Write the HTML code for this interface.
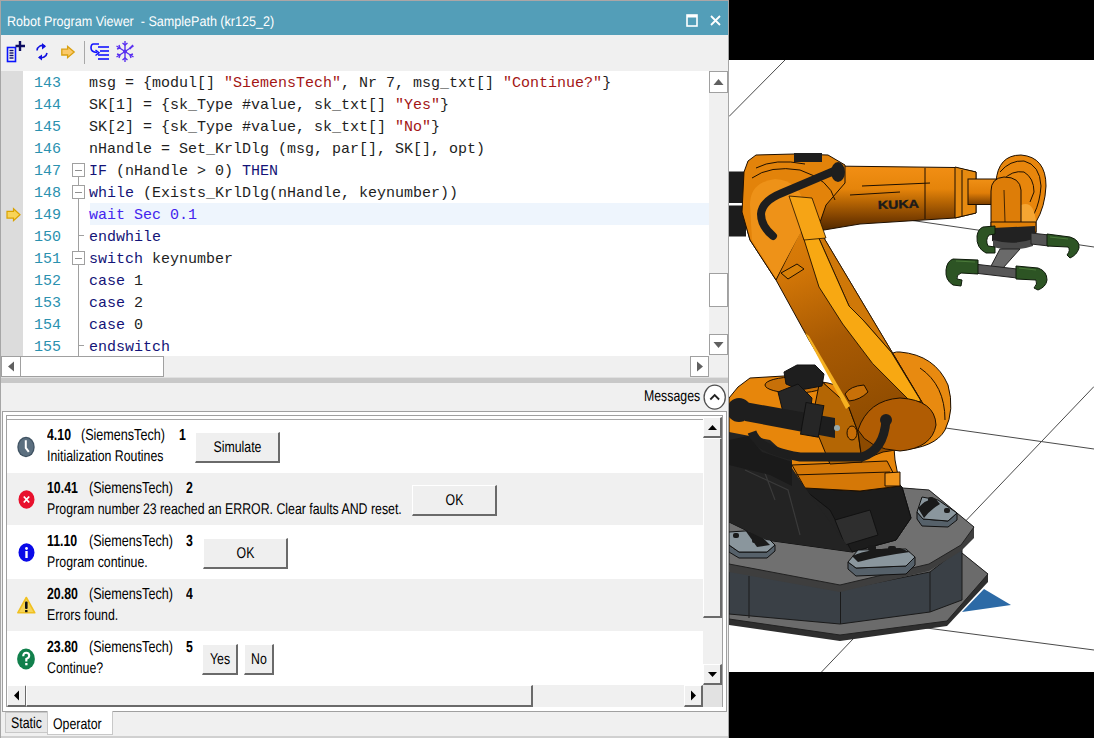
<!DOCTYPE html>
<html><head><meta charset="utf-8">
<style>
*{margin:0;padding:0;box-sizing:border-box}
html,body{width:1094px;height:738px;overflow:hidden;background:#000;font-family:"Liberation Sans",sans-serif}
.a{position:absolute}
#panel{position:absolute;left:0;top:0;width:729px;height:738px;background:#f0f0f0;overflow:hidden}
.bl{position:absolute;background:#a6a6a6}
#title{position:absolute;left:1px;top:1px;width:727px;height:34px;background:#539eb8;color:#fff}
.tt{position:absolute;left:6px;top:11.7px;font-size:14px;line-height:16px;white-space:pre;transform:scaleX(0.897);transform-origin:0 0;text-rendering:geometricPrecision}
#code{position:absolute;left:1px;top:71px;width:708px;height:285px;background:#fff;overflow:hidden}
#gutter{position:absolute;left:0;top:0;width:22px;height:285px;background:#dcdcdc}
.ln{position:absolute;left:33px;font-family:"Liberation Mono",monospace;font-size:15px;color:#2b91af;height:22px;line-height:22px;white-space:pre}
.cl{position:absolute;left:88px;font-family:"Liberation Mono",monospace;font-size:15px;color:#1e1e1e;height:22px;line-height:22px;white-space:pre}
.s{color:#a31515}
.k{color:#141478}
.w{color:#4424ee}
.sb{position:absolute;background:#fff;border:1px solid #a0a0a0}
.mt{position:absolute;font-size:14px;line-height:16px;color:#000;white-space:pre;transform:scaleX(0.88);transform-origin:0 0}
.b{font-weight:bold}
.btn{position:absolute;background:#efefef;border-top:1px solid #fff;border-left:1px solid #fff;border-right:2px solid #6a6a6a;border-bottom:2px solid #6a6a6a}
.cb{position:absolute;background:#f0f0f0;border-top:1px solid #fff;border-left:1px solid #fff;border-right:2px solid #6a6a6a;border-bottom:2px solid #6a6a6a}
.h{font-size:16px;transform:scaleX(0.77);text-rendering:geometricPrecision}
.bd{font-size:15.5px;transform:scaleX(0.795);text-rendering:geometricPrecision}

</style></head><body>
<div class="a" style="left:729px;top:60px;width:365px;height:612px;background:#fff;overflow:hidden"><svg width="365" height="612" viewBox="729 60 365 612" style="position:absolute;left:0;top:0">
<defs>
<linearGradient id="ua" x1="0" y1="0" x2="0" y2="1">
<stop offset="0" stop-color="#f28f14"/>
<stop offset="0.35" stop-color="#e5840a"/>
<stop offset="0.55" stop-color="#b56403"/>
<stop offset="0.8" stop-color="#7a3e00"/>
<stop offset="1" stop-color="#4a2600"/>
</linearGradient>
<linearGradient id="la" x1="0" y1="0" x2="0.3" y2="1">
<stop offset="0" stop-color="#e3840a"/>
<stop offset="0.3" stop-color="#d27607"/>
<stop offset="0.6" stop-color="#a85a03"/>
<stop offset="1" stop-color="#8c4a00"/>
</linearGradient>
</defs>
<!-- floor lines -->
<g stroke="#4a4a4a" stroke-width="1" fill="none">
<line x1="729" y1="116.5" x2="785" y2="60"/>
<line x1="909" y1="220" x2="1094" y2="247"/>
<line x1="935" y1="426.5" x2="1094" y2="449"/>
<line x1="919" y1="627" x2="1094" y2="650"/>
<line x1="821.5" y1="672" x2="1094" y2="386.5"/>
</g>
<!-- lower plate -->
<path d="M729 556 L962 553 L988 574 L988 582 L947 626 L840 641 L729 625 Z" fill="#2e2e2e"/>
<path d="M729 556 L962 553 L988 574 L947 621 L840 635 L729 619 Z" fill="#6b6b6b" stroke="#222" stroke-width="1"/>
<!-- blue triangle -->
<path d="M962 612 L984 589 L1011 605 Z" fill="#2c6aa6"/>
<!-- box faces -->
<path d="M729 570 L840 590 L930 572 L962 547 L962 600 L930 612 L840 624 L729 614 Z" fill="#3a4046" stroke="#1a1a1a" stroke-width="1"/>
<line x1="749" y1="576" x2="749" y2="618" stroke="#1a1a1a"/>
<line x1="840.5" y1="590" x2="840.5" y2="624" stroke="#1a1a1a"/>
<line x1="930" y1="572" x2="930" y2="612" stroke="#1a1a1a"/>
<!-- upper plate -->
<path d="M729 510 L903 488 L929 490 L974 527 L974 538 L961 551 L929 571 L840 592 L729 572 Z" fill="#3e3e3e"/>
<path d="M729 510 L903 488 L929 490 L974 527 L961 545 L929 564 L840 585 L729 564 Z" fill="#707070" stroke="#222" stroke-width="1"/>
<!-- dark robot base -->
<path d="M729 440 L746 434 L792 461 L792 480 L887 474 L902 487 L911 518 L896 540 L852 552 L766 540 L729 522 Z" fill="#232323" stroke="#111"/>
<path d="M792 480 L887 474 L902 487 L911 518 L896 540 L852 552 L830 510 Z" fill="#1c1c1c" stroke="#111"/>
<path d="M835 520 L870 510 L878 535 L845 545 Z" fill="#2e2e2e" stroke="#111"/>
<path d="M752 505 L775 498 L790 530 L770 535 Z" fill="#2a2a2a" stroke="#111"/>
<!-- bolt feet -->
<g stroke="#111" stroke-width="1">
<path d="M848 562 L856 568 L906 566 L915 557 L915 565 L906 574 L856 576 L848 569 Z" fill="#56616a"/>
<path d="M848 562 L858 550 L906 549 L915 557 L906 566 L856 568 Z" fill="#8a969d"/>
<path d="M917 512 L923 519 L948 521 L957 513 L957 520 L948 527 L922 526 L917 519 Z" fill="#56616a"/>
<path d="M917 512 L922 497 L938 500 L957 513 L948 521 L923 519 Z" fill="#8a969d"/>
<path d="M729 545 L739 552 L767 552 L775 545 L775 551 L767 558 L739 558 L729 552 Z" fill="#56616a"/>
<path d="M729 532 L760 530 L775 545 L767 552 L739 552 L729 545 Z" fill="#8a969d"/>
</g>
<g fill="#1a1a1a">
<path d="M852 556 Q870 548 900 548 L910 552 Q880 556 858 562 Z"/>
<path d="M918 508 Q925 500 935 498 L940 504 Q930 510 924 518 Z"/>
<path d="M745 530 L760 535 L770 545 L757 547 Z"/>
<rect x="868" y="545" width="8" height="6" rx="2"/><rect x="888" y="546" width="8" height="6" rx="2"/>
<rect x="928" y="497" width="6" height="5" rx="2"/><rect x="944" y="508" width="6" height="5" rx="2"/>
<rect x="733" y="533" width="6" height="5" rx="2"/><rect x="752" y="538" width="7" height="5" rx="2"/>
</g>
<!-- turntable orange -->
<path d="M729 398 L738 387 L750 378 L784 376 L828 383 L890 400 L895 460 L900 486 L860 491 L805 488 L792 470 L729 455 Z" fill="#e7860b" stroke="#1e0f00" stroke-width="1"/>
<path d="M792 465 L887 461 L900 486 L860 491 L805 488 Z" fill="#d57807" stroke="#1e0f00" stroke-width="1"/>
<path d="M792 475 L890 472" stroke="#1e0f00" stroke-width="1"/>
<path d="M885 473 L900 472 L900 486 L885 486 Z" fill="#f0941a" stroke="#1e0f00"/>
<ellipse cx="795" cy="385" rx="30" ry="8" fill="#c77008" stroke="#1e0f00"/>
<!-- shoulder disk -->
<path d="M880 448 Q860 430 875 380 Q885 350 900 352 Q935 355 948 385 Q955 410 945 430 Q935 448 900 450 Z" fill="#e88a10" stroke="#1e0f00" stroke-width="1"/>
<path d="M920 368 Q945 385 945 420" fill="none" stroke="#1e0f00" stroke-width="1"/>
<!-- lower arm -->
<path d="M820 380 L848 405 L858 432 L862 462 L830 464 L812 420 Z" fill="#b46604" stroke="#1e0f00" stroke-width="1"/>
<path d="M742 212 L750 240 L776 280 L809 340 L848 405 L858 432 L862 460 L883 452 L915 447 L935 425 L922 402 L892 352 L818 228 Z" fill="url(#la)" stroke="#1e0f00" stroke-width="1"/>
<path d="M817 234 L818 228 L892 352 L921 401 L891.5 352.5 L863 320 L849 306 Z" fill="#cf7808" stroke="#1e0f00" stroke-width="0.8"/>
<path d="M801 230 L817 234 L849 306 L863 320 L891.5 352.5 L921 401 L912 403 L872.5 363.4 L842.7 324 L819 287 Z" fill="#f8a812" stroke="#1e0f00" stroke-width="0.9"/>

<path d="M805 333 L809 336 L850 406 L846 409 Z" fill="#f5b020"/>
<path d="M858 430 Q868 400 900 398 Q935 400 936 425 Q932 448 900 451 Q868 449 858 430 Z" fill="#b05c03" stroke="#1e0f00" stroke-width="1"/>
<ellipse cx="852" cy="433" rx="5" ry="7" fill="#c86e06" stroke="#1e0f00"/>
<path d="M845 394 Q850 386 864 385 L868 392 Q860 400 849 401 Z" fill="#c87008" stroke="#1e0f00"/>
<!-- black hoses / motors -->
<path d="M784 372 L797 365 L815 365 L824 374 L822 386 L800 390 L786 384 Z" fill="#1e1e1e" stroke="#111"/>
<path d="M778 392 L798 384 L812 398 L810 416 L784 416 Z" fill="#262626" stroke="#111"/>
<path d="M729 432 L770 440 L792 460 L792 468 L806 489 L852 552 L766 540 L729 522 Z" fill="#232323"/>
<path d="M745 470 L788 490 L800 535 M760 460 L775 500" fill="none" stroke="#3a3a3a" stroke-width="1.2"/>
<circle cx="739" cy="410" r="12" fill="#1e1e1e"/>
<path d="M745 402 L835 418 L835 438 L745 421 Z" fill="#1e1e1e"/>
<rect x="803" y="404" width="18" height="32" fill="#262626" stroke="#111" transform="rotate(10 813 421)"/>
<circle cx="837" cy="428" r="3" fill="#9aa"/>
<path d="M752 432 Q758 450 800 457 L862 457 Q884 450 886 420" fill="none" stroke="#1e1e1e" stroke-width="9"/>
<circle cx="886" cy="420" r="6" fill="#1e1e1e"/>
<path d="M729 440 L748 436 L762 452 L792 462 L792 486 L770 475 L729 465 Z" fill="#1a1a1a"/>
<!-- left black cable band -->
<rect x="729" y="171.5" width="17" height="31.5" fill="#1c1c1c"/>
<rect x="729" y="205.5" width="17" height="31" fill="#1c1c1c"/>
<!-- upper arm -->
<path d="M830 166 L955 167.5 L976 172 L976 213 L955 218 L860 224 L812 232 L800 200 Z" fill="url(#ua)" stroke="#1e0f00" stroke-width="1"/>
<path d="M955 167 L976 172 L976 213 L955 218 Z" fill="#e58a10" stroke="#1e0f00" stroke-width="1"/>
<path d="M862 186 L930 183 M850 195 L900 192" stroke="#1e0f00" stroke-width="1"/>
<line x1="925" y1="168" x2="925" y2="219" stroke="#1e0f00"/>
<line x1="962" y1="170" x2="962" y2="216" stroke="#1e0f00"/>
<text x="878" y="209" font-family="Liberation Sans" font-weight="bold" font-size="11.5" fill="#1a1a1a" stroke="#1a1a1a" stroke-width="0.4" textLength="41" lengthAdjust="spacingAndGlyphs" transform="rotate(-2 878 209)">KUKA</text>
<!-- elbow -->
<path d="M744 172 L748 161 L756 155 L794 154 L828 155 L845 165 L845 183 L826 205 L818 228 L801 230 L776 280 L750 240 L742 212 Z" fill="#e3830a" stroke="#1e0f00" stroke-width="1"/>
<path d="M750 205 Q750 182 775 179 Q800 180 806 210 L801 232 L776 278 L752 240 Z" fill="#ee9218"/>
<path d="M752 178 Q770 165 800 170 Q830 180 835 200" fill="none" stroke="#1e0f00" stroke-width="1"/>
<path d="M756 168 Q775 158 805 164" fill="none" stroke="#1e0f00" stroke-width="1"/>
<path d="M789 196 L812 198 L826 238 L804 240 Z" fill="#f6a415" stroke="#1e0f00" stroke-width="0.8"/>
<rect x="794" y="153" width="28" height="9" fill="#1e1e1e"/>
<path d="M781 273 L797 264 L804 269 L788 279 Z" fill="#d88008" stroke="#1e0f00"/>
<!-- black cable on elbow -->
<path d="M773 236 Q761 226 761 214 Q762 201 782 193 L834 171" fill="none" stroke="#1e1e1e" stroke-width="8" stroke-linecap="round"/>
<ellipse cx="838" cy="172" rx="7" ry="10" fill="#1e1e1e"/>
<!-- wrist -->
<defs><linearGradient id="cy" x1="0" y1="0" x2="0" y2="1"><stop offset="0" stop-color="#f09015"/><stop offset="0.55" stop-color="#e07e08"/><stop offset="1" stop-color="#7a3e00"/></linearGradient></defs>
<rect x="968" y="179" width="28" height="25.5" fill="url(#cy)" stroke="#1e0f00"/>
<path d="M996 182 Q998 155 1021 155 Q1046 157 1046 186 Q1045 207 1036 222 L1036 233 L996 233 Z" fill="#e8860c" stroke="#1e0f00"/>
<path d="M1000 172 Q1010 160 1024 161 Q1040 165 1041 186 Q1040 202 1034 214" fill="none" stroke="#1e0f00" stroke-width="1"/>
<path d="M1003 180 Q1012 170 1024 172 Q1034 178 1034 192 L1030 202" fill="none" stroke="#1e0f00" stroke-width="1"/>
<path d="M1021 205 Q1034 200 1036 222 L1021 227 Z" fill="#f5a532"/>
<path d="M991 191 Q991 178 1004 177 Q1020 177 1021 190 L1021 229 L991 229 Z" fill="#dd7d08" stroke="#1e0f00" stroke-width="1"/>
<path d="M1004 190 L1005 222" stroke="#1e0f00" stroke-width="0.8"/>
<path d="M991 222 L1036 222 L1036 232 Q1013 237 991 232 Z" fill="#e08008" stroke="#1e0f00"/>
<!-- flange -->
<path d="M992 228 L1035 226 L1035 240 Q1014 248 992 241 Z" fill="#222"/>
<path d="M993 240 Q1013 246 1033 239 L1033 246 Q1013 253 993 247 Z" fill="#4a4a4a"/>
<!-- gripper bars -->
<path d="M1031 233 L1049 235 L1049 246 L1031 244 Z" fill="#555" stroke="#222"/>
<path d="M1000 249 L1020 249 L1003 268 L990 268 Z" fill="#6a6a6a" stroke="#222"/>
<path d="M974 264 L1017 269 L1017 278 L974 273 Z" fill="#575757" stroke="#222"/>
<!-- claws -->
<g fill="#2d5424" stroke="#0e1a0a" stroke-width="1">
<path d="M983 227 L995 226 L995 234 L989 235 Q985 240 988 246 L995 247 L995 253 L986 253 Q976 248 977 236 Q978 229 983 227 Z"/>
<path d="M1047 234 L1070 237 Q1080 240 1079 248 Q1077 255 1070 258 L1067 255 Q1071 250 1068 247 L1047 246 Z"/>
<path d="M953 259 L978 260 L978 274 L961 273 Q956 275 957 279 L962 280 L961 286 L953 285 Q945 280 946 270 Q947 261 953 259 Z"/>
<path d="M1016 266 L1038 268 Q1047 271 1047 280 Q1046 287 1038 290 L1034 288 Q1038 284 1036 280 L1016 279 Z"/>
</g>
<g stroke="#4b7a3a" stroke-width="1.2" fill="none">
<path d="M1050 237 L1068 239"/><path d="M956 261 L975 262"/><path d="M1019 268 L1036 270"/>
</g>
</svg>
</div>
<div id="panel">
<div class="bl" style="left:0;top:0;width:729px;height:1px;background:#aca6a6"></div>
<div class="bl" style="left:0;top:0;width:1px;height:738px"></div>
<div class="bl" style="left:728px;top:0;width:1px;height:738px"></div>
<div id="title"><span class="tt">Robot Program Viewer&nbsp; - SamplePath (kr125_2)</span>
<svg class="a" style="left:680px;top:10px" width="45" height="20">
<rect x="6" y="4" width="10" height="11" fill="none" stroke="#fff" stroke-width="1.6"/>
<rect x="6" y="4" width="10" height="2.5" fill="#fff"/>
<path d="M30 5 L39 14 M39 5 L30 14" stroke="#fff" stroke-width="1.8"/>
</svg>
</div>
<svg class="a" style="left:1px;top:35px" width="140" height="36">
<rect x="6.5" y="12.5" width="8" height="14" fill="none" stroke="#0a14ff" stroke-width="1.6"/>
<g stroke="#10106a" stroke-width="1.4"><line x1="8.5" y1="15.5" x2="12.5" y2="15.5"/><line x1="8.5" y1="18" x2="12.5" y2="18"/><line x1="8.5" y1="20.5" x2="12.5" y2="20.5"/><line x1="8.5" y1="23" x2="12.5" y2="23"/></g>
<path d="M19 6 V16 M14.5 11 H24" stroke="#0c0c60" stroke-width="2.4"/>
<path d="M36 15.5 A5.5 5.5 0 0 1 44 11" fill="none" stroke="#1010e0" stroke-width="1.6"/>
<path d="M41 8 L45 11.5 L41 14.5 Z" fill="#1010e0"/>
<path d="M46 18 A5.5 5.5 0 0 1 38 22" fill="none" stroke="#1010e0" stroke-width="1.6"/>
<path d="M41 19.5 L37 22.5 L41 25.5 Z" fill="#1010e0"/>
<path d="M60.8 14.2 h5.8 v-2.7 l6.6 5.6 l-6.6 5.6 v-2.7 h-5.8 z" fill="#fbc96a" stroke="#d9a010" stroke-width="1.3"/>
<line x1="83.5" y1="6" x2="83.5" y2="29" stroke="#a8a8a8" stroke-width="1"/>
<path d="M98 9 H92.5 Q90 9 90 13 Q90 17 96 17.5" fill="none" stroke="#1414ff" stroke-width="1.6"/>
<path d="M94.5 15 L98 17.8 L94.5 20.5" fill="none" stroke="#1414ff" stroke-width="1.5"/>
<g stroke="#1414ff" stroke-width="1.6"><line x1="97" y1="12" x2="108" y2="12"/><line x1="99" y1="16" x2="108" y2="16"/><line x1="97" y1="20" x2="108" y2="20"/><line x1="97" y1="24" x2="108" y2="24"/></g>
<g stroke="#5a30f0" stroke-width="1.4" fill="none">
<line x1="124" y1="6" x2="124" y2="27"/>
<line x1="115.5" y1="11" x2="132.5" y2="22"/>
<line x1="115.5" y1="22" x2="132.5" y2="11"/>
<path d="M121.5 8 L124 10 L126.5 8 M121.5 25 L124 23 L126.5 25"/>
<path d="M116 14 L119 13 L118 10 M130 14 L129 13 L132 10"/>
<path d="M116 19 L119 20 L118 23 M132 19 L129 20 L130 23"/>
</g>
<circle cx="124" cy="16.5" r="2" fill="#5a30f0"/>
</svg>
<div id="code">
<div id="gutter"></div><div class="a" style="left:89px;top:132px;width:619px;height:22px;background:#eef5fd"></div><div class="ln" style="top:1.5px">143</div><div class="cl" style="top:1.5px">msg = {modul[] <span class="s">"SiemensTech"</span>, Nr 7, msg_txt[] <span class="s">"Continue?"</span>}</div><div class="ln" style="top:23.5px">144</div><div class="cl" style="top:23.5px">SK[1] = {sk_Type #value, sk_txt[] <span class="s">"Yes"</span>}</div><div class="ln" style="top:45.5px">145</div><div class="cl" style="top:45.5px">SK[2] = {sk_Type #value, sk_txt[] <span class="s">"No"</span>}</div><div class="ln" style="top:67.5px">146</div><div class="cl" style="top:67.5px">nHandle = Set_KrlDlg (msg, par[], SK[], opt)</div><div class="ln" style="top:89.5px">147</div><div class="cl" style="top:89.5px"><span class="k">IF</span> (nHandle &gt; 0) <span class="k">THEN</span></div><div class="ln" style="top:111.5px">148</div><div class="cl" style="top:111.5px"><span class="k">while</span> (Exists_KrlDlg(nHandle, keynumber))</div><div class="ln" style="top:133.5px">149</div><div class="cl" style="top:133.5px"><span class="w">wait Sec 0.1</span></div><div class="ln" style="top:155.5px">150</div><div class="cl" style="top:155.5px"><span class="k">endwhile</span></div><div class="ln" style="top:177.5px">151</div><div class="cl" style="top:177.5px"><span class="k">switch</span> keynumber</div><div class="ln" style="top:199.5px">152</div><div class="cl" style="top:199.5px"><span class="k">case</span> 1</div><div class="ln" style="top:221.5px">153</div><div class="cl" style="top:221.5px"><span class="k">case</span> 2</div><div class="ln" style="top:243.5px">154</div><div class="cl" style="top:243.5px"><span class="k">case</span> 0</div><div class="ln" style="top:265.5px">155</div><div class="cl" style="top:265.5px"><span class="k">endswitch</span></div><svg class="a" style="left:0;top:0" width="708" height="285">
<g fill="none" stroke="#a0a0a0" stroke-width="1" shape-rendering="crispEdges">
<line x1="77.5" y1="105" x2="77.5" y2="285"/>
<line x1="77" y1="164.5" x2="83" y2="164.5"/>
<line x1="77" y1="274.5" x2="83" y2="274.5"/>
</g>
<g stroke="#a0a0a0" stroke-width="1" fill="#fff" shape-rendering="crispEdges">
<rect x="71.5" y="92.5" width="11.5" height="13"/>
<rect x="71.5" y="114.5" width="11.5" height="13"/>
<rect x="71.5" y="180.5" width="11.5" height="13"/>
</g>
<g stroke="#909090" stroke-width="1" shape-rendering="crispEdges">
<line x1="74" y1="99.5" x2="81" y2="99.5"/>
<line x1="74" y1="121.5" x2="81" y2="121.5"/>
<line x1="74" y1="187.5" x2="81" y2="187.5"/>
</g>
<path d="M6 140.3 h6.5 v-2.6 l6.5 6 l-6.5 6 v-2.6 h-6.5 z" fill="#f8d458" stroke="#d9a200" stroke-width="1.2"/>
</svg>
</div>
<!-- code v scrollbar -->
<div class="a" style="left:709px;top:71px;width:19px;height:285px;background:#f0f0f0"></div>
<div class="sb" style="left:709px;top:71px;width:19px;height:22px"></div>
<svg class="a" style="left:709px;top:71px" width="19" height="22"><path d="M4.5 14 L9.5 8 L14.5 14 Z" fill="#606060"/></svg>
<div class="sb" style="left:709px;top:273px;width:19px;height:34px"></div>
<div class="sb" style="left:709px;top:334px;width:19px;height:21px"></div>
<svg class="a" style="left:709px;top:334px" width="19" height="21"><path d="M4.5 8 L14.5 8 L9.5 14 Z" fill="#606060"/></svg>
<!-- code h scrollbar -->
<div class="a" style="left:1px;top:356px;width:727px;height:21px;background:#f0f0f0"></div>
<div class="sb" style="left:1px;top:356px;width:20px;height:21px"></div>
<svg class="a" style="left:1px;top:356px" width="20" height="21"><path d="M13 5.5 L7 10.5 L13 15.5 Z" fill="#606060"/></svg>
<div class="sb" style="left:20px;top:356px;width:144px;height:21px"></div>
<div class="sb" style="left:690px;top:356px;width:19px;height:21px"></div>
<svg class="a" style="left:690px;top:356px" width="19" height="21"><path d="M7 5.5 L13 10.5 L7 15.5 Z" fill="#606060"/></svg>
<!-- splitter -->
<div class="a" style="left:1px;top:377px;width:727px;height:1px;background:#e0e0e0"></div>
<div class="a" style="left:1px;top:378px;width:727px;height:5px;background:#c8c8c8"></div>
<!-- messages header -->
<span class="mt bd" style="left:644px;top:389px">Messages</span>
<svg class="a" style="left:702px;top:383px" width="26" height="28">
<ellipse cx="12.7" cy="14.2" rx="10.6" ry="12" fill="#fff" stroke="#505050" stroke-width="1.3"/>
<path d="M8.3 16.5 L12.7 12 L17.1 16.5" fill="none" stroke="#202020" stroke-width="1.8"/>
</svg>
<!-- messages list -->
<div class="a" style="left:2px;top:411px;width:725px;height:301px;border:1px solid #a0a0a0;background:#fff"></div>
<div class="a" style="left:6px;top:415px;width:717px;height:292px;border-top:1px solid #a0a0a0;border-left:1px solid #a0a0a0;border-right:1px solid #a0a0a0"></div>
<div class="a" style="left:7px;top:419px;width:696px;height:1px;background:#a8a8a8"></div>
<div class="a" style="left:7px;top:420px;width:696px;height:52px;background:#fff"></div>
<svg class="a" style="left:18px;top:437px;overflow:visible" width="17" height="19"><ellipse cx="8" cy="10" rx="8.7" ry="10.2" fill="#3f5262"/><ellipse cx="8" cy="10" rx="7.5" ry="9" fill="#5b6f7f"/><path d="M7.8 3.2 V10.8 L10.8 14.8" fill="none" stroke="#fff" stroke-width="2"/></svg>
<span class="mt b h" style="left:47px;top:427.5px">4.10</span>
<span class="mt h" style="left:81px;top:427.5px;transform:scaleX(0.786)">(SiemensTech)</span>
<span class="mt b h" style="left:179px;top:427.5px">1</span>
<span class="mt bd" style="left:47px;top:449px">Initialization Routines</span>
<div class="btn" style="left:195px;top:432px;width:85px;height:31px"></div>
<span class="mt bd" style="left:195px;top:440px;width:106.9px;text-align:center">Simulate</span>
<div class="a" style="left:7px;top:473px;width:696px;height:52px;background:#f0f0f0"></div>
<svg class="a" style="left:18px;top:490px;overflow:visible" width="17" height="19"><ellipse cx="8.5" cy="9.5" rx="8" ry="9.3" fill="#e8112d"/><path d="M5.8 6.5 L11.2 12.5 M11.2 6.5 L5.8 12.5" stroke="#fff" stroke-width="1.8"/></svg>
<span class="mt b h" style="left:47px;top:480.5px">10.41</span>
<span class="mt h" style="left:89px;top:480.5px;transform:scaleX(0.786)">(SiemensTech)</span>
<span class="mt b h" style="left:186px;top:480.5px">2</span>
<span class="mt bd" style="left:47px;top:502px">Program number 23 reached an ERROR. Clear faults AND reset.</span>
<div class="btn" style="left:412px;top:485px;width:85px;height:31px"></div>
<span class="mt bd" style="left:412px;top:493px;width:106.9px;text-align:center">OK</span>
<div class="a" style="left:7px;top:526px;width:696px;height:52px;background:#fff"></div>
<svg class="a" style="left:18px;top:543px;overflow:visible" width="17" height="19"><ellipse cx="8.5" cy="9.5" rx="8" ry="9.3" fill="#0a0ae8"/><circle cx="8.5" cy="5.5" r="1.4" fill="#fff"/><rect x="7.3" y="8" width="2.4" height="7" fill="#fff"/></svg>
<span class="mt b h" style="left:47px;top:533.5px">11.10</span>
<span class="mt h" style="left:89px;top:533.5px;transform:scaleX(0.786)">(SiemensTech)</span>
<span class="mt b h" style="left:186px;top:533.5px">3</span>
<span class="mt bd" style="left:47px;top:555px">Program continue.</span>
<div class="btn" style="left:203px;top:538px;width:85px;height:31px"></div>
<span class="mt bd" style="left:203px;top:546px;width:106.9px;text-align:center">OK</span>
<div class="a" style="left:7px;top:579px;width:696px;height:52px;background:#f0f0f0"></div>
<svg class="a" style="left:18px;top:596px;overflow:visible" width="17" height="19"><path d="M8.3 1.5 L16.8 16.8 L-0.2 16.8 Z" fill="#f6d458" stroke="#f0c020" stroke-width="1.6" stroke-linejoin="round"/><rect x="7" y="5.5" width="2.6" height="7.5" rx="1" fill="#111"/><rect x="7.1" y="14" width="2.4" height="2.2" fill="#111"/></svg>
<span class="mt b h" style="left:47px;top:586.5px">20.80</span>
<span class="mt h" style="left:89px;top:586.5px;transform:scaleX(0.786)">(SiemensTech)</span>
<span class="mt b h" style="left:186px;top:586.5px">4</span>
<span class="mt bd" style="left:47px;top:608px">Errors found.</span>
<div class="a" style="left:7px;top:632px;width:696px;height:52px;background:#fff"></div>
<svg class="a" style="left:18px;top:649px;overflow:visible" width="17" height="19"><ellipse cx="8" cy="10" rx="8.9" ry="10.4" fill="#11804c"/><path d="M5.2 7.2 Q5.2 3.8 8.2 3.8 Q11.2 3.8 11.2 6.8 Q11.2 8.8 8.3 10 V12.6" fill="none" stroke="#fff" stroke-width="2.1"/><rect x="7.2" y="14" width="2.3" height="2.3" fill="#fff"/></svg>
<span class="mt b h" style="left:47px;top:639.5px">23.80</span>
<span class="mt h" style="left:89px;top:639.5px;transform:scaleX(0.786)">(SiemensTech)</span>
<span class="mt b h" style="left:186px;top:639.5px">5</span>
<span class="mt bd" style="left:47px;top:661px">Continue?</span>
<div class="btn" style="left:202px;top:644px;width:36px;height:31px"></div>
<span class="mt bd" style="left:202px;top:652px;width:45.3px;text-align:center">Yes</span>
<div class="btn" style="left:244px;top:644px;width:30px;height:31px"></div>
<span class="mt bd" style="left:244px;top:652px;width:37.7px;text-align:center">No</span>
<div class="a" style="left:703px;top:417px;width:19px;height:268px;background:#f0f0f0"></div>
<div class="cb" style="left:703px;top:417px;width:19px;height:21px"></div>
<svg class="a" style="left:703px;top:417px" width="19" height="21"><path d="M5 13 L9.5 8 L14 13 Z" fill="#000"/></svg>
<div class="cb" style="left:703px;top:438px;width:19px;height:180px"></div>
<div class="cb" style="left:703px;top:664px;width:19px;height:21px"></div>
<svg class="a" style="left:703px;top:664px" width="19" height="21"><path d="M5 8 L14 8 L9.5 13 Z" fill="#000"/></svg>
<div class="a" style="left:7px;top:685px;width:715px;height:22px;background:#f0f0f0"></div>
<div class="cb" style="left:7px;top:685px;width:20px;height:22px"></div>
<svg class="a" style="left:7px;top:685px" width="20" height="21"><path d="M12 5.5 L7 10.5 L12 15.5 Z" fill="#000"/></svg>
<div class="cb" style="left:26px;top:685px;width:507px;height:22px"></div>
<div class="cb" style="left:684px;top:685px;width:19px;height:22px"></div>
<svg class="a" style="left:684px;top:685px" width="19" height="21"><path d="M7 5.5 L12 10.5 L7 15.5 Z" fill="#000"/></svg>
<div class="a" style="left:703px;top:685px;width:19px;height:22px;background:#e2e2e2"></div>
<div class="a" style="left:1px;top:712px;width:727px;height:26px;background:#f0f0f0"></div>

<div class="a" style="left:5px;top:712px;width:43px;height:21px;background:#e8e8e8;border:1px solid #c8c8c8;border-right:none"></div>
<span class="mt bd" style="left:11px;top:715.5px">Static</span>
<div class="a" style="left:47px;top:711px;width:66px;height:24px;background:#fff;border:1px solid #c8c8c8;border-top:none"></div>
<span class="mt bd" style="left:53px;top:716.5px">Operator</span>
<div class="a" style="left:1px;top:736px;width:727px;height:2px;background:#d0d0d0"></div>
</div>

</body></html>
